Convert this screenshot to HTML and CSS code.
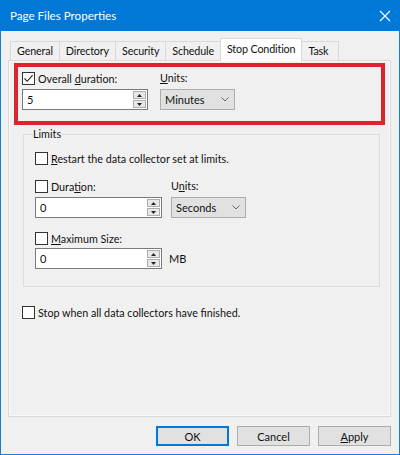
FILE: index.html
```html
<!DOCTYPE html>
<html>
<head>
<meta charset="utf-8">
<link rel="stylesheet" href="styles.css">
</head>
<body>
<div class="window">
  <div class="titlebar">
    <span class="title">Page Files Properties</span>
    <svg class="close" width="12" height="12" viewBox="0 0 12 12"><path d="M1 1L11 11M11 1L1 11" stroke="#fff" stroke-width="1.1" fill="none"/></svg>
  </div>
  <div class="client">
    <div class="tabs">
      <div class="tab">General</div>
      <div class="tab">Directory</div>
      <div class="tab">Security</div>
      <div class="tab">Schedule</div>
      <div class="tab selected">Stop Condition</div>
      <div class="tab last">Task</div>
    </div>
    <div class="panel">
      <div class="highlight">
        <div class="pair">
          <div class="col-left">
            <label class="check-row"><span class="box"><svg width="11" height="11" viewBox="0 0 11 11"><path d="M1.5 5.5L4.2 8.3L9.6 2.2" stroke="#222" stroke-width="1.1" fill="none"/></svg></span><span>Overall <u>d</u>uration:</span></label>
            <div class="spin wide">
              <span class="spin-value">5</span>
              <span class="spin-btns">
                <span class="spin-btn"><svg width="5" height="3" viewBox="0 0 5 3"><path d="M0 3L2.5 0L5 3Z" fill="#222"/></svg></span>
                <span class="spin-btn"><svg width="5" height="3" viewBox="0 0 5 3"><path d="M0 0L2.5 3L5 0Z" fill="#222"/></svg></span>
              </span>
            </div>
          </div>
          <div class="col-right">
            <div class="label-row"><u>U</u>nits:</div>
            <div class="combo"><span>Minutes</span><svg width="8" height="5" viewBox="0 0 8 5"><path d="M0.5 0.5L4 4L7.5 0.5" stroke="#666" stroke-width="1" fill="none"/></svg></div>
          </div>
        </div>
      </div>

      <fieldset class="group">
        <legend>Limits</legend>
        <label class="check-row restart"><span class="box"></span><span><u>R</u>estart the data collector set at limits.</span></label>
        <div class="pair duration">
          <div class="col-left">
            <label class="check-row"><span class="box"></span><span>Dura<u>t</u>ion:</span></label>
            <div class="spin wide2">
              <span class="spin-value">0</span>
              <span class="spin-btns">
                <span class="spin-btn"><svg width="5" height="3" viewBox="0 0 5 3"><path d="M0 3L2.5 0L5 3Z" fill="#222"/></svg></span>
                <span class="spin-btn"><svg width="5" height="3" viewBox="0 0 5 3"><path d="M0 0L2.5 3L5 0Z" fill="#222"/></svg></span>
              </span>
            </div>
          </div>
          <div class="col-right2">
            <div class="label-row">U<u>n</u>its:</div>
            <div class="combo"><span>Seconds</span><svg width="8" height="5" viewBox="0 0 8 5"><path d="M0.5 0.5L4 4L7.5 0.5" stroke="#666" stroke-width="1" fill="none"/></svg></div>
          </div>
        </div>
        <label class="check-row maxsize"><span class="box"></span><span><u>M</u>aximum Size:</span></label>
        <div class="size-row">
          <div class="spin wide2">
            <span class="spin-value">0</span>
            <span class="spin-btns">
              <span class="spin-btn"><svg width="5" height="3" viewBox="0 0 5 3"><path d="M0 3L2.5 0L5 3Z" fill="#222"/></svg></span>
              <span class="spin-btn"><svg width="5" height="3" viewBox="0 0 5 3"><path d="M0 0L2.5 3L5 0Z" fill="#222"/></svg></span>
            </span>
          </div>
          <span class="unit">MB</span>
        </div>
      </fieldset>

      <label class="check-row stop"><span class="box"></span><span>Stop when all data collectors have finished.</span></label>
    </div>
    <div class="buttons">
      <div class="btn default">OK</div>
      <div class="btn">Cancel</div>
      <div class="btn"><u>A</u>pply</div>
    </div>
  </div>
</div>
</body>
</html>
```

FILE: styles.css
```css
* { box-sizing: border-box; }
html, body { margin: 0; padding: 0; background: #f0f0f0; }
body {
  font-family: Lato, "Liberation Sans", sans-serif;
  font-size: 10.75px;
  color: #111;
}
.window {
  width: 400px;
  height: 455px;
  display: flex;
  flex-direction: column;
}
.titlebar {
  height: 31px;
  background: #0078d7;
  display: flex;
  align-items: center;
  justify-content: space-between;
  padding: 0 9px 0 10px;
  flex: none;
}
.title { color: #fff; font-size: 11.6px; }
.close { display: block; }
.client {
  flex: 1;
  display: flex;
  flex-direction: column;
  border: 1px solid #1a7fd4;
  border-top: none;
  padding: 7px 8px 8px 7px;
}
.tabs {
  display: flex;
  align-items: flex-end;
  height: 22px;
  padding-left: 2px;
  flex: none;
}
.tab {
  height: 19px;
  line-height: 17px;
  padding: 0 6px;
  letter-spacing: -0.15px;
  border: 1px solid #d9d9d9;
  border-bottom: none;
  border-right: none;
  background: #f0f0f0;
  white-space: nowrap;
}
.tab.last { border-right: 1px solid #d9d9d9; padding-right: 10px; }
.tab.selected {
  height: 23px;
  line-height: 19px;
  background: #fff;
  border-right: 1px solid #d9d9d9;
  margin-bottom: -1px;
  position: relative;
  z-index: 1;
}
.tab.selected + .tab { border-left: none; }
.panel {
  flex: 1;
  border: 1px solid #d9d9d9;
  box-shadow: inset 0 0 0 1px #fafafa;
  background: #f0f0f0;
  display: flex;
  flex-direction: column;
  align-items: flex-start;
}
.highlight {
  margin: 2px 0 0 5px;
  width: 371px;
  height: 62px;
  border: 4px solid #d9252d;
  padding: 4px 0 0 4px;
}
.pair { display: flex; }
.col-left { width: 126px; }
.col-right { margin-left: 12px; }
.col-right2 { margin-left: 10px; }
.check-row {
  display: flex;
  align-items: center;
  height: 14px;
  white-space: nowrap;
}
.box {
  width: 13px;
  height: 13px;
  border: 1px solid #333;
  background: #fff;
  margin-right: 3px;
  display: flex;
  align-items: center;
  justify-content: center;
  flex: none;
}
.box svg { display: block; }
.label-row { height: 14px; line-height: 14px; }
.spin {
  margin-top: 4px;
  height: 21px;
  border: 1px solid #7a7a7a;
  background: #fff;
  display: flex;
  align-items: center;
  justify-content: space-between;
  padding: 0 1px 0 4px;
}
.spin.wide { width: 126px; }
.spin.wide2 { width: 127px; }
.spin-value { font-size: 11px; }
.spin-btns { display: flex; flex-direction: column; gap: 1px; }
.spin-btn {
  width: 13px;
  height: 8px;
  border: 1px solid #adadad;
  background: #e8e8e8;
  display: flex;
  align-items: center;
  justify-content: center;
}
.spin-btn svg { display: block; }
.combo {
  margin-top: 4px;
  width: 75px;
  height: 21px;
  border: 1px solid #adadad;
  background: #e1e1e1;
  display: flex;
  align-items: center;
  justify-content: space-between;
  padding: 0 5px 0 4px;
  font-size: 11px;
}
.combo svg { display: block; }
.group {
  margin: 2px 0 0 14px;
  width: 357px;
  height: 160px;
  border: 1px solid #dcdcdc;
  padding: 0 0 0 11px;
}
.group legend {
  margin-left: -3px;
  padding: 0 1px;
  line-height: 14px;
}
.restart { margin-top: 10px; }
.duration { margin-top: 14px; }
.maxsize { margin-top: 13px; }
.size-row { display: flex; align-items: center; }
.size-row .spin { margin-top: 3px; }
.unit { margin-left: 7px; margin-top: 3px; font-size: 11px; }
.stop { margin: 18px 0 0 13px; }
.buttons {
  flex: none;
  display: flex;
  justify-content: flex-end;
  gap: 8px;
  margin-top: 9px;
}
.btn {
  width: 73px;
  height: 20px;
  border: 1px solid #adadad;
  background: #e1e1e1;
  display: flex;
  align-items: center;
  justify-content: center;
  font-size: 11px;
}
.btn.default { border: 2px solid #0078d7; }
u { text-decoration-thickness: 1px; text-underline-offset: 1px; }
```
